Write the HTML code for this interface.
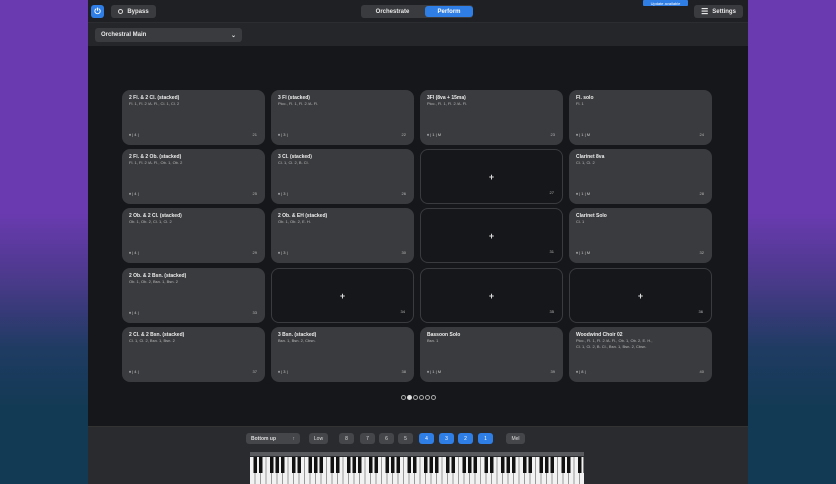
<!DOCTYPE html>
<html><head><meta charset="utf-8"><style>
*{margin:0;padding:0;box-sizing:border-box}
body{width:836px;height:484px;overflow:hidden;position:relative;font-family:"Liberation Sans",sans-serif;background:linear-gradient(180deg,#6a3ab0 0%,#6a3ab0 44%,#4a3a8a 58%,#1f3b62 72%,#133a55 84%,#133a55 100%)}
#app{position:absolute;left:88px;top:0;width:660px;height:484px;background:#16171a}
.top{position:absolute;left:0;top:0;width:660px;height:23px;background:#1f2023;border-bottom:1px solid #2c2d30}
.sub{position:absolute;left:0;top:23px;width:660px;height:23px;background:#25262a}
.btn{position:absolute;background:#3a3b3f;border-radius:3px;color:#e8e8e8;font-size:6px;font-weight:bold;display:flex;align-items:center;justify-content:center}
.blue{background:#2f7ee6;color:#fff}
.main{position:absolute;left:0;top:46px;width:660px;height:380px;background:#16171a}
.card{position:absolute;width:143px;height:55px;border-radius:8px;background:#3a3b3e;color:#eee}
.card .t{position:absolute;left:7px;top:5px;font-size:5px;font-weight:bold}
.card .s{position:absolute;left:7px;top:11px;font-size:4px;color:#bbb;line-height:6px}
.card .l{position:absolute;left:7px;bottom:8px;font-size:4px;color:#ccc}
.card .n{position:absolute;right:8px;bottom:8px;font-size:4px;color:#bbb}
.empty{background:#16171a;border:1px solid #3a3b3e}
.empty .p{position:absolute;left:0;right:0;top:22px;text-align:center;font-size:9px;color:#ddd;font-weight:bold}
.bottom{position:absolute;left:0;top:426px;width:660px;height:58px;background:#2a2b2e;border-top:1px solid #333}
.num{position:absolute;top:433px;width:15px;height:11px;border-radius:3px;background:#45464a;color:#ddd;font-size:5px;display:flex;align-items:center;justify-content:center}
.num.b{background:#2f7ee6;color:#fff}
</style></head><body>
<div id="app">
<div class="top">
 <div class="btn blue" style="left:3px;top:5px;width:13px;height:13px;font-size:8px">⏻</div>
 <div class="btn" style="left:23px;top:5px;width:45px;height:13px"><span style="display:inline-block;width:5px;height:5px;border:1px solid #ddd;border-radius:50%;margin-right:4px"></span>Bypass</div>
 <div class="btn" style="left:273px;top:5px;width:112px;height:13px;background:#3a3b3f"></div>
 <div class="btn" style="left:273px;top:5px;width:63px;height:13px;background:transparent">Orchestrate</div>
 <div class="btn blue" style="left:337px;top:6px;width:48px;height:11px">Perform</div>
 <div class="btn blue" style="left:555px;top:0;width:45px;height:6px;font-size:4px;font-weight:normal;border-radius:1px">Update available</div>
 <div class="btn" style="left:606px;top:5px;width:49px;height:13px"><span style="font-size:8px;margin-right:4px">☰</span>Settings</div>
</div>
<div class="sub">
 <div class="btn" style="left:7px;top:5px;width:147px;height:14px;justify-content:space-between;padding:0 6px;background:#3a3b3f"><span>Orchestral Main</span><span style="font-size:6px">⌄</span></div>
</div>
<div class="main"></div>

<div class="card" style="left:34px;top:90px"><div class="t">2 Fl. &amp; 2 Cl. (stacked)</div><div class="s">Fl. 1, Fl. 2 /A. Fl., Cl. 1, Cl. 2</div><div class="l">♦ | 4 |</div><div class="n">21</div></div>
<div class="card" style="left:183px;top:90px"><div class="t">3 Fl (stacked)</div><div class="s">Picc., Fl. 1, Fl. 2 /A. Fl.</div><div class="l">♦ | 3 |</div><div class="n">22</div></div>
<div class="card" style="left:332px;top:90px"><div class="t">3Fl (8va + 15ma)</div><div class="s">Picc., Fl. 1, Fl. 2 /A. Fl.</div><div class="l">♦ | 1 | M</div><div class="n">23</div></div>
<div class="card" style="left:481px;top:90px"><div class="t">Fl. solo</div><div class="s">Fl. 1</div><div class="l">♦ | 1 | M</div><div class="n">24</div></div>

<div class="card" style="left:34px;top:149px"><div class="t">2 Fl. &amp; 2 Ob. (stacked)</div><div class="s">Fl. 1, Fl. 2 /A. Fl., Ob. 1, Ob. 2</div><div class="l">♦ | 4 |</div><div class="n">25</div></div>
<div class="card" style="left:183px;top:149px"><div class="t">3 Cl. (stacked)</div><div class="s">Cl. 1, Cl. 2, B. Cl.</div><div class="l">♦ | 3 |</div><div class="n">26</div></div>
<div class="card empty" style="left:332px;top:149px"><div class="p">+</div><div class="n">27</div></div>
<div class="card" style="left:481px;top:149px"><div class="t">Clarinet 8va</div><div class="s">Cl. 1, Cl. 2</div><div class="l">♦ | 1 | M</div><div class="n">28</div></div>

<div class="card" style="left:34px;top:208px"><div class="t">2 Ob. &amp; 2 Cl. (stacked)</div><div class="s">Ob. 1, Ob. 2, Cl. 1, Cl. 2</div><div class="l">♦ | 4 |</div><div class="n">29</div></div>
<div class="card" style="left:183px;top:208px"><div class="t">2 Ob. &amp; EH (stacked)</div><div class="s">Ob. 1, Ob. 2, E. H.</div><div class="l">♦ | 3 |</div><div class="n">30</div></div>
<div class="card empty" style="left:332px;top:208px"><div class="p">+</div><div class="n">31</div></div>
<div class="card" style="left:481px;top:208px"><div class="t">Clarinet Solo</div><div class="s">Cl. 1</div><div class="l">♦ | 1 | M</div><div class="n">32</div></div>

<div class="card" style="left:34px;top:268px"><div class="t">2 Ob. &amp; 2 Bsn. (stacked)</div><div class="s">Ob. 1, Ob. 2, Bsn. 1, Bsn. 2</div><div class="l">♦ | 4 |</div><div class="n">33</div></div>
<div class="card empty" style="left:183px;top:268px"><div class="p">+</div><div class="n">34</div></div>
<div class="card empty" style="left:332px;top:268px"><div class="p">+</div><div class="n">35</div></div>
<div class="card empty" style="left:481px;top:268px"><div class="p">+</div><div class="n">36</div></div>

<div class="card" style="left:34px;top:327px"><div class="t">2 Cl. &amp; 2 Bsn. (stacked)</div><div class="s">Cl. 1, Cl. 2, Bsn. 1, Bsn. 2</div><div class="l">♦ | 4 |</div><div class="n">37</div></div>
<div class="card" style="left:183px;top:327px"><div class="t">3 Bsn. (stacked)</div><div class="s">Bsn. 1, Bsn. 2, Cbsn.</div><div class="l">♦ | 3 |</div><div class="n">38</div></div>
<div class="card" style="left:332px;top:327px"><div class="t">Bassoon Solo</div><div class="s">Bsn. 1</div><div class="l">♦ | 1 | M</div><div class="n">39</div></div>
<div class="card" style="left:481px;top:327px"><div class="t">Woodwind Choir 02</div><div class="s">Picc., Fl. 1, Fl. 2 /A. Fl., Ob. 1, Ob. 2, E. H.,<br>Cl. 1, Cl. 2, B. Cl., Bsn. 1, Bsn. 2, Cbsn.</div><div class="l">♦ | 8 |</div><div class="n">40</div></div>

<div style="position:absolute;left:313px;top:395px;display:flex;gap:1px">
 <span style="width:5px;height:5px;border:1px solid #aaa;border-radius:50%"></span>
 <span style="width:5px;height:5px;background:#ddd;border-radius:50%"></span>
 <span style="width:5px;height:5px;border:1px solid #aaa;border-radius:50%"></span>
 <span style="width:5px;height:5px;border:1px solid #aaa;border-radius:50%"></span>
 <span style="width:5px;height:5px;border:1px solid #aaa;border-radius:50%"></span>
 <span style="width:5px;height:5px;border:1px solid #aaa;border-radius:50%"></span>
</div>

<div class="bottom"></div>
<div class="num" style="left:158px;width:54px;justify-content:space-between;padding:0 5px;font-weight:bold">Bottom up<span>↑</span></div>
<div class="num" style="left:221px;width:19px">Low</div>
<div class="num" style="left:251px">8</div>
<div class="num" style="left:272px">7</div>
<div class="num" style="left:291px">6</div>
<div class="num" style="left:310px">5</div>
<div class="num b" style="left:331px">4</div>
<div class="num b" style="left:351px">3</div>
<div class="num b" style="left:370px">2</div>
<div class="num b" style="left:390px">1</div>
<div class="num" style="left:418px;width:19px">Mel</div>
<div style="position:absolute;left:162px;top:452px;width:334px;height:4px;background:#5a5b5e"></div>
<div style="position:absolute;left:162px;top:457px;width:334px;height:27px;background:repeating-linear-gradient(90deg,#f2f2f2 0 4.5px,#9a9a9a 4.5px 5.5px)"></div>
<div style="position:absolute;left:162px;top:457px;width:334px;height:16px;background:repeating-linear-gradient(90deg,transparent 0 3.5px,#111 3.5px 7px,transparent 7px 9px,#111 9px 12.5px,transparent 12.5px 20px,#111 20px 23.5px,transparent 23.5px 25.5px,#111 25.5px 29px,transparent 29px 31px,#111 31px 34.5px,transparent 34.5px 38.5px)"></div>
</div>
</body></html>
